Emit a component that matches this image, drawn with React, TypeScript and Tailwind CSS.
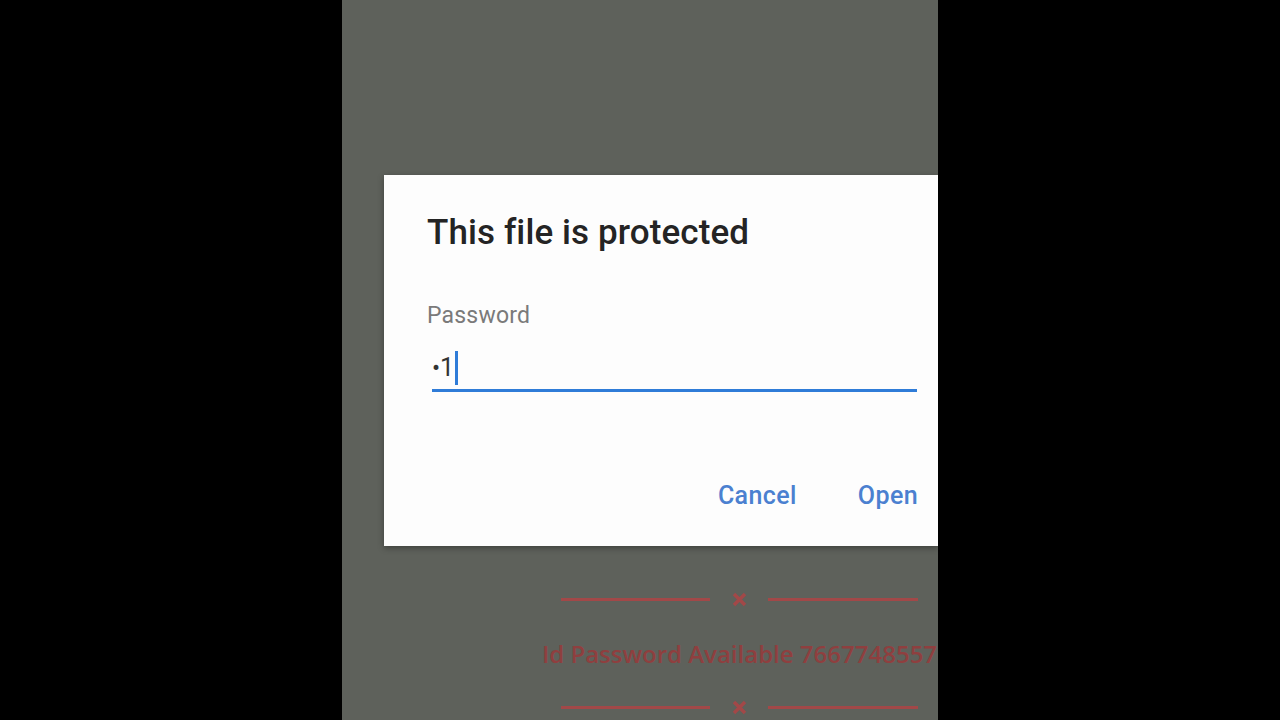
export default function App() {
  return (
    <div className="flex h-[720px] w-[1280px] justify-center overflow-hidden bg-black">
      <div className="flex h-full w-[596px] flex-col overflow-hidden bg-[#5e615b]">
        {/* dialog */}
        <div
          className="ml-[42px] mt-[175px] flex h-[371px] w-[554px] flex-col bg-[#fdfdfd] pl-[43px] shadow-[0_2px_6px_rgba(0,0,0,0.35)]"
          style={{ fontFamily: "Roboto, 'Liberation Sans', sans-serif" }}
        >
          <div className="mt-[38px] h-[40px] text-[35px] font-medium leading-[40px] tracking-[0.1px] text-[#242424]">
            This file is protected
          </div>
          <div className="mt-[49px] h-[28px] text-[23px] leading-[28px] tracking-[0.2px] text-[#7a7a7a]">
            Password
          </div>
          <div className="mt-[20px] flex h-[36px] w-[485px] items-center pl-[5px] text-[25px] leading-[36px] text-[#333]">
            <span className="text-[24px]">•</span>
            <span>1</span>
            <span className="ml-[1px] h-[34px] w-[3px] bg-[#2f7cd8]" />
          </div>
          <div className="ml-[5px] mt-[3px] h-[3px] w-[485px] bg-[#2f7cd8]" />
          <div className="mt-[89px] flex items-center justify-end gap-[61px] pr-[20px] text-[25px] font-medium leading-[30px] tracking-[0.4px] text-[#4b80d0]">
            <span>Cancel</span>
            <span>Open</span>
          </div>
        </div>

        {/* watermark */}
        <div
          className="ml-[219px] mt-[45px] flex w-[357px] flex-col text-[#a24848]"
          style={{ fontFamily: "'Open Sans', 'Liberation Sans', sans-serif" }}
        >
          <Divider />
          <div className="mt-[32px] flex justify-center whitespace-nowrap text-[24px] font-semibold leading-[30px] text-[#8f3f3f]">
            Id Password Available 7667748557
          </div>
          <div className="mt-[30px]">
            <Divider />
          </div>
        </div>
      </div>
    </div>
  );
}

function Divider() {
  return (
    <div className="flex h-[16px] items-center">
      <div className="h-[3px] w-[149px] bg-[#a24848]" />
      <div className="flex w-[58px] justify-center">
        <svg width="15" height="15" viewBox="0 0 15 15">
          <path d="M2 2L13 13M13 2L2 13" stroke="#a24848" strokeWidth="3.5" strokeLinecap="butt" />
        </svg>
      </div>
      <div className="h-[3px] w-[150px] bg-[#a24848]" />
    </div>
  );
}
